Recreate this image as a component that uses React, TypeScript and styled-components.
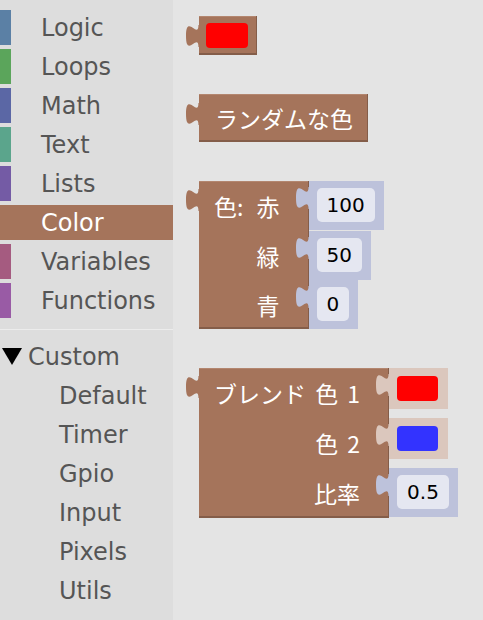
import React from "react";
import styled, { createGlobalStyle } from "styled-components";

const GlobalStyle = createGlobalStyle`
  html, body {
    margin: 0;
    padding: 0;
  }
  body {
    width: 483px;
    height: 620px;
    overflow: hidden;
    background: #e4e4e4;
  }
`;

const BROWN = "#a5745b";
const BROWN_DARK = "#845d49";
const LAVENDER = "#bdc2db";
const TAN = "#dbc7bd";

const Workspace = styled.div`
  display: flex;
  width: 483px;
  height: 620px;
  font-family: "DejaVu Sans", Verdana, sans-serif;
`;

/* ---------- toolbox ---------- */

const Toolbox = styled.div`
  width: 173px;
  flex: none;
  box-sizing: border-box;
  padding-top: 10px;
  background: #dddddd;
`;

const Row = styled.div<{ $selected?: boolean }>`
  display: flex;
  align-items: center;
  height: 35px;
  margin-bottom: 4px;
  background: ${(p) => (p.$selected ? BROWN : "transparent")};
  color: ${(p) => (p.$selected ? "#ffffff" : "#555555")};
  font-size: 24px;
  white-space: nowrap;
`;

const Swatch = styled.span<{ $color: string }>`
  flex: none;
  width: 11px;
  height: 100%;
  background: ${(p) => p.$color};
`;

const RowLabel = styled.span<{ $indent: number }>`
  padding-left: ${(p) => p.$indent}px;
  line-height: 1;
`;

const Separator = styled.div`
  height: 1px;
  margin: 11px 0 9px;
  background: #ececec;
`;

const Arrow = styled.span`
  flex: none;
  width: 0;
  height: 0;
  margin-left: 2px;
  border-left: 10px solid transparent;
  border-right: 10px solid transparent;
  border-top: 17px solid #000000;
`;

/* ---------- flyout / blocks ---------- */

const Flyout = styled.div`
  flex: 1;
  display: flex;
  flex-direction: column;
  align-items: flex-start;
  gap: 39px;
  padding: 16px 0 0 26px;
`;

const Block = styled.div`
  position: relative;
  display: flex;
  align-items: flex-start;
`;

const Body = styled.div<{ $padding?: string }>`
  display: flex;
  flex-direction: column;
  padding: ${(p) => p.$padding ?? "0"};
  background: ${BROWN};
  box-shadow: inset -1px -2px 0 ${BROWN_DARK}, inset 0 1px 0 #b3866f;
`;

const Label = styled.div<{ $h: number; $spacing?: number }>`
  display: flex;
  align-items: center;
  justify-content: flex-end;
  height: ${(p) => p.$h}px;
  padding: 0 29px 0 15px;
  color: #ffffff;
  font-family: "Noto Sans CJK JP", "DejaVu Sans", sans-serif;
  font-size: 23px;
  word-spacing: ${(p) => p.$spacing ?? 4}px;
  white-space: nowrap;
`;

const PlainLabel = styled(Label)`
  padding: 0 15px 0 16px;
`;

const Slots = styled.div`
  display: flex;
  flex-direction: column;
`;

const SlotCell = styled.div<{ $h: number }>`
  display: flex;
  align-items: flex-start;
  height: ${(p) => p.$h}px;
`;

const Shadow = styled.div<{ $color: string; $padding: string }>`
  position: relative;
  padding: ${(p) => p.$padding};
  background: ${(p) => p.$color};
`;

const NumberField = styled.div`
  min-width: 12px;
  height: 34px;
  padding: 0 10px;
  border-radius: 5px;
  background: #e5e7f1;
  color: #000000;
  font-size: 20px;
  line-height: 34px;
`;

const ColourField = styled.div<{ $color: string; $w?: number }>`
  width: ${(p) => p.$w ?? 41}px;
  height: 25px;
  border-radius: 4px;
  background: ${(p) => p.$color};
`;

const TabSvg = styled.svg<{ $left: number; $top: number }>`
  position: absolute;
  left: ${(p) => p.$left}px;
  top: ${(p) => p.$top}px;
  width: 14px;
  height: 22px;
  overflow: visible;
`;

function Tab({ color, left, top }: { color: string; left: number; top: number }) {
  return (
    <TabSvg $left={left} $top={top} viewBox="0 0 9 15" preserveAspectRatio="none">
      <path
        d="M9,0 L8,0 C8,10 0,-8 0,7.5 C0,23 8,5 8,15 L9,15 Z"
        fill={color}
      />
    </TabSvg>
  );
}

function NumberSlot({ value, h }: { value: string; h: number }) {
  return (
    <SlotCell $h={h}>
      <Shadow $color={LAVENDER} $padding="7px 9px 8px 8px">
        <Tab color={LAVENDER} left={-13} top={6} />
        <NumberField>{value}</NumberField>
      </Shadow>
    </SlotCell>
  );
}

function ColourSlot({ color, h }: { color: string; h: number }) {
  return (
    <SlotCell $h={h}>
      <Shadow $color={TAN} $padding="8px 10px 8px 8px">
        <Tab color={TAN} left={-13} top={6} />
        <ColourField $color={color} />
      </Shadow>
    </SlotCell>
  );
}

const categories = [
  { name: "Logic", color: "#5b80a5" },
  { name: "Loops", color: "#5ba55b" },
  { name: "Math", color: "#5b67a5" },
  { name: "Text", color: "#5ba58c" },
  { name: "Lists", color: "#745ba5" },
  { name: "Color", color: BROWN, selected: true },
  { name: "Variables", color: "#a55b80" },
  { name: "Functions", color: "#995ba5" },
];

const customItems = ["Default", "Timer", "Gpio", "Input", "Pixels", "Utils"];

export default function App() {
  return (
    <>
      <GlobalStyle />
      <Workspace>
        <Toolbox>
          {categories.map((c) => (
            <Row key={c.name} $selected={c.selected}>
              <Swatch $color={c.color} />
              <RowLabel $indent={30}>{c.name}</RowLabel>
            </Row>
          ))}
          <Separator />
          <Row>
            <Arrow />
            <RowLabel $indent={6}>Custom</RowLabel>
          </Row>
          {customItems.map((name) => (
            <Row key={name}>
              <RowLabel $indent={59}>{name}</RowLabel>
            </Row>
          ))}
        </Toolbox>

        <Flyout>
          <Block>
            <Tab color={BROWN} left={-13} top={9} />
            <Body $padding="7px 9px 7px 7px">
              <ColourField $color="#ff0000" $w={42} />
            </Body>
          </Block>

          <Block>
            <Tab color={BROWN} left={-13} top={9} />
            <Body>
              <PlainLabel $h={48}>ランダムな色</PlainLabel>
            </Body>
          </Block>

          <Block>
            <Tab color={BROWN} left={-13} top={8} />
            <Body>
              <Label $h={50} $spacing={8}>色: 赤</Label>
              <Label $h={49}>緑</Label>
              <Label $h={49}>青</Label>
            </Body>
            <Slots>
              <NumberSlot value="100" h={50} />
              <NumberSlot value="50" h={49} />
              <NumberSlot value="0" h={49} />
            </Slots>
          </Block>

          <Block>
            <Tab color={BROWN} left={-13} top={8} />
            <Body>
              <Label $h={50}>ブレンド 色 1</Label>
              <Label $h={50}>色 2</Label>
              <Label $h={50}>比率</Label>
            </Body>
            <Slots>
              <ColourSlot color="#ff0000" h={50} />
              <ColourSlot color="#3333ff" h={50} />
              <NumberSlot value="0.5" h={50} />
            </Slots>
          </Block>
        </Flyout>
      </Workspace>
    </>
  );
}
